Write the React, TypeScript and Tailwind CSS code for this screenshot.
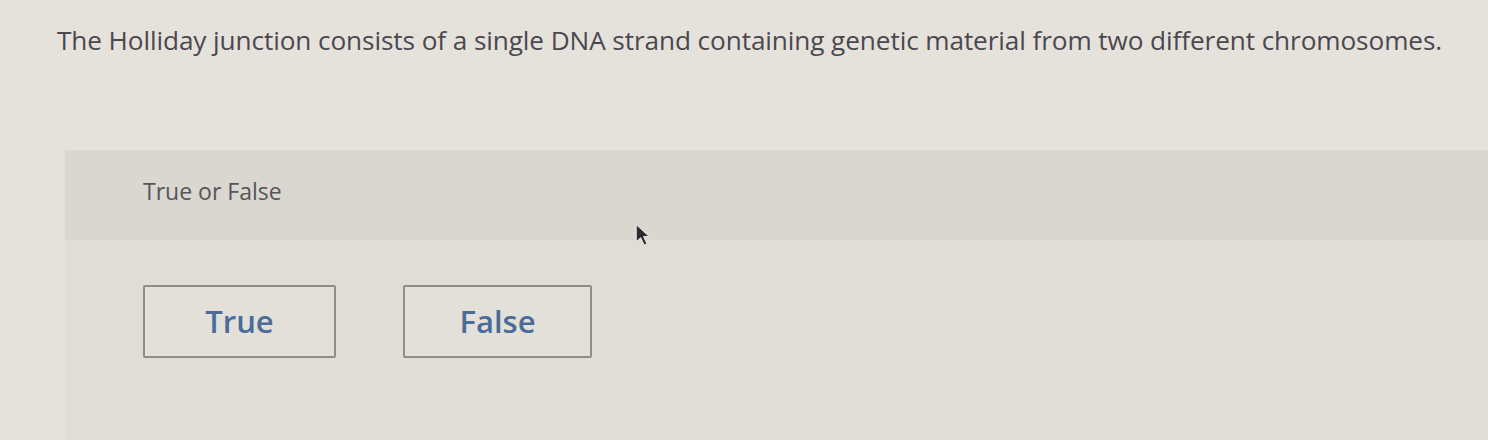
import React from "react";

function Cursor() {
  return (
    <svg width="18" height="28" viewBox="0 0 16 22" className="absolute left-[634px] top-[222px]">
      <path d="M2 1 L2 16 L6 12.5 L9 19 L11.5 18 L8.5 11.5 L13.5 11.5 Z" fill="#2b2a30" stroke="#f2f0ea" strokeWidth="0.8" />
    </svg>
  );
}

export default function App() {
  return (
    <div
      className="relative h-[440px] w-[1488px] overflow-hidden bg-[#e5e2db] text-[#4b4850]"
      style={{ fontFamily: '"Open Sans", "Liberation Sans", sans-serif' }}
    >
      <div className="pl-[57px] pt-[21px] text-[26.2px] leading-[38px] tracking-[-0.1px]">
        The Holliday junction consists of a single DNA strand containing genetic material from two different chromosomes.
      </div>

      <div className="ml-[65px] mt-[91px]">
        <div className="h-[90px] bg-[#d9d7d0] pl-[78px] pt-[25px] text-[23px] leading-[32px] text-[#57545a]">
          True or False
        </div>
        <div className="flex h-[200px] gap-[67px] bg-[#dfddd6] pl-[78px] pt-[45px]">
          <button className="h-[73px] w-[193px] rounded-[2px] border-2 border-[#8e8d8b] bg-[#e2e0d9] text-[31px] font-semibold text-[#4b6c9a]">
            True
          </button>
          <button className="h-[73px] w-[189px] rounded-[2px] border-2 border-[#8e8d8b] bg-[#e2e0d9] text-[31px] font-semibold text-[#4b6c9a]">
            False
          </button>
        </div>
      </div>

      <Cursor />
    </div>
  );
}
